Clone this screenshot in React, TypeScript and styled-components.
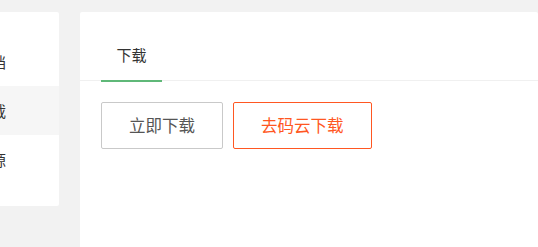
import React from "react";
import styled, { createGlobalStyle } from "styled-components";

const GlobalStyle = createGlobalStyle`
  html, body { margin: 0; padding: 0; background: #f2f2f2; overflow: hidden; }
  body { font-family: "Noto Sans CJK SC", "Liberation Sans", sans-serif; color: #333; }
  * { box-sizing: border-box; }
`;

const Page = styled.div`
  display: flex;
  align-items: flex-start;
  gap: 21px;
  padding-top: 12px;
  height: 247px;
`;

const Side = styled.div`
  flex: 0 0 100px;
  margin-left: -41px;
  background: #fff;
  border-radius: 2px;
  padding: 25px 0 22px;
`;

const MenuItem = styled.div<{ $active?: boolean }>`
  height: 49px;
  line-height: 49px;
  padding-left: 17px;
  font-size: 15px;
  color: #333;
  background: ${(p) => (p.$active ? "#f6f6f6" : "#fff")};
  white-space: nowrap;
`;

const Main = styled.div`
  flex: 1;
  align-self: stretch;
  background: #fff;
  border-radius: 2px 2px 0 0;
  padding-top: 20px;
`;

const TabBar = styled.div`
  height: 49px;
  border-bottom: 1px solid #f0f0f0;
  padding-left: 21px;
  display: flex;
`;

const Tab = styled.div<{ $active?: boolean }>`
  position: relative;
  width: 61px;
  text-align: center;
  height: 48px;
  line-height: 46px;
  font-size: 15px;
  color: #333;
  &::after {
    content: "";
    display: ${(p) => (p.$active ? "block" : "none")};
    position: absolute;
    left: 0;
    right: 0;
    bottom: -2px;
    height: 2px;
    background: #5fb878;
  }
`;

const Buttons = styled.div`
  display: flex;
  gap: 10px;
  padding: 21px 0 0 21px;
`;

const Button = styled.div<{ $variant?: "primary" | "default" }>`
  height: 47px;
  line-height: 45px;
  padding: 0 27px;
  font-size: 16.5px;
  white-space: nowrap;
  border-radius: 2px;
  border: 1px solid ${(p) => (p.$variant === "primary" ? "#ff5722" : "#c9c9c9")};
  color: ${(p) => (p.$variant === "primary" ? "#ff5722" : "#555")};
  background: #fff;
`;

export default function App() {
  return (
    <>
      <GlobalStyle />
      <Page>
        <Side>
          <MenuItem>文档</MenuItem>
          <MenuItem $active>下载</MenuItem>
          <MenuItem>资源</MenuItem>
        </Side>
        <Main>
          <TabBar>
            <Tab $active>下载</Tab>
          </TabBar>
          <Buttons>
            <Button>立即下载</Button>
            <Button $variant="primary">去码云下载</Button>
          </Buttons>
        </Main>
      </Page>
    </>
  );
}
